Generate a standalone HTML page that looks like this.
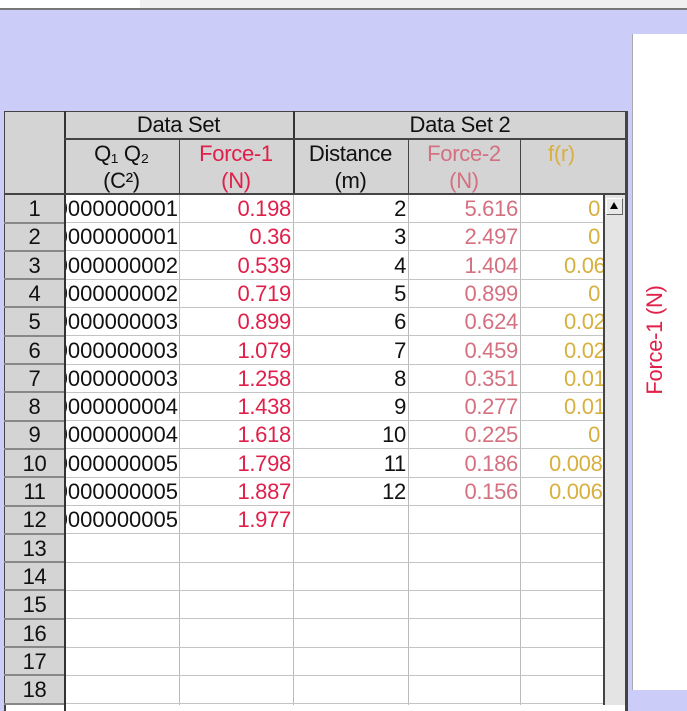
<!DOCTYPE html>
<html><head><style>
body{margin:0;width:687px;height:700px;overflow:hidden;background:#ccccf8;position:relative;font-family:"Liberation Sans",Arial,sans-serif;}
.a{position:absolute;box-sizing:border-box;}
.t{font-size:22px;letter-spacing:-0.3px;line-height:28px;height:28px;white-space:nowrap;overflow:hidden;}
</style></head><body>
<div class="a" style="left:0;top:0;width:687px;height:8px;background:#f0f0f0"></div>
<div class="a" style="left:0;top:0;width:140px;height:8px;background:#fff"></div>
<div class="a" style="left:0;top:8px;width:687px;height:2px;background:#777"></div>
<div class="a" style="left:632px;top:34px;width:55px;height:656px;background:#fff;border-left:1px solid #aaa"></div>
<div class="a t" style="left:560px;top:326px;width:190px;text-align:center;color:#e0204a;transform:rotate(-90deg)">Force-1 (N)</div>
<div class="a" style="left:4px;top:111px;width:624px;height:600px;background:#fff;border:2px solid #444;border-bottom:none"></div>
<div class="a" style="left:5px;top:112px;width:622px;height:83px;background:#d4d4d4"></div>
<div class="a" style="left:5px;top:195px;width:59px;height:510px;background:#d4d4d4"></div>
<div id="g"></div>
<script>
var h='';
h+='<div class="a" style="left:64px;top:111px;width:2px;height:600px;background:#333"></div>';
h+='<div class="a" style="left:293px;top:111px;width:2px;height:84px;background:#333"></div>';
h+='<div class="a" style="left:64px;top:138px;width:563px;height:2px;background:#444"></div>';
h+='<div class="a" style="left:4px;top:193px;width:623px;height:2px;background:#444"></div>';
[179,408,520].forEach(function(x){h+='<div class="a" style="left:'+x+'px;top:139px;width:1px;height:56px;background:#444"></div>';});
[179,293,408,520].forEach(function(x){h+='<div class="a" style="left:'+x+'px;top:195px;width:1px;height:510px;background:#bbb"></div>';});
function tx(x,y,w,s,c,al,ex){h+='<div class="a t" style="left:'+x+'px;top:'+y+'px;width:'+w+'px;text-align:'+(al||'center')+';color:'+c+';'+(ex||'')+'">'+s+'</div>';}
tx(64,111,229,'Data Set','#111');tx(295,111,330,'Data Set 2','#111');
tx(64,140,115,'Q₁ Q₂','#111');tx(64,167,115,'(C²)','#111');
tx(179,140,114,'Force-1','#e0204a');tx(179,167,114,'(N)','#e0204a');
tx(293,140,115,'Distance','#111');tx(293,167,115,'(m)','#111');
tx(408,140,112,'Force-2','#d47080');tx(408,167,112,'(N)','#d47080');
tx(520,140,83,'f(r)','#d8b040');
var q='000000001,000000001,000000002,000000002,000000003,000000003,000000003,000000004,000000004,000000005,000000005,000000005'.split(',');
var f1=['0.198','0.36','0.539','0.719','0.899','1.079','1.258','1.438','1.618','1.798','1.887','1.977'];
var d=['2','3','4','5','6','7','8','9','10','11','12'];
var f2=['5.616','2.497','1.404','0.899','0.624','0.459','0.351','0.277','0.225','0.186','0.156'];
var fr=['0','0','0.06','0','0.02','0.02','0.01','0.01','0','0.008','0.006'];
for(var i=0;i<18;i++){
 var y=195+i*28.3;
 h+='<div class="a" style="left:4px;top:'+(y+26.5)+'px;width:60px;height:2px;background:#888"></div>';
 h+='<div class="a" style="left:66px;top:'+(y+27)+'px;width:537px;height:1px;background:#c4c4c4"></div>';
 tx(5,y,59,String(i+1),'#111');
 if(i<12){tx(66,y,112,'0.00'+q[i],'#111','right','direction:rtl;letter-spacing:0;');tx(179,y,112,f1[i],'#e0204a','right');}
 if(i<11){tx(293,y,113,d[i],'#111','right');tx(408,y,110,f2[i],'#d47080','right');
  var s=fr[i];h+='<div class="a t" style="left:521px;top:'+y+'px;width:82px;color:#d8b040;"><span style="position:absolute;'+(s.length>1?'left:'+(s.length>4?28:43)+'px':'right:3px')+'">'+s+'</span></div>';}
}
h+='<div class="a" style="left:603px;top:195px;width:24px;height:510px;background:#e4e4e4;border-left:2px solid #444"></div>';
h+='<div class="a" style="left:606px;top:198px;width:17px;height:17px;background:#e8e8e8;border:1px solid #666;border-top-color:#fff;border-left-color:#fff"></div>';
h+='<div class="a" style="left:610px;top:202px;width:0;height:0;border-left:4px solid transparent;border-right:4px solid transparent;border-bottom:7px solid #000"></div>';
h+='<div class="a" style="left:625px;top:111px;width:3px;height:600px;background:#444"></div>';
document.getElementById('g').innerHTML=h;
</script>
</body></html>
